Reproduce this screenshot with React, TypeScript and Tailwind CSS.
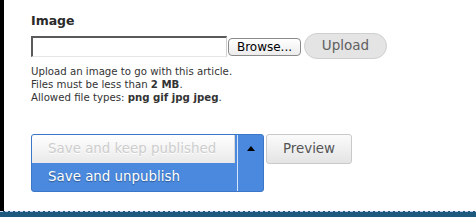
import React from "react";

export default function App() {
  return (
    <div className="w-[476px] h-[217px] flex flex-col bg-white font-['DejaVu_Sans',sans-serif] overflow-hidden">
      <div className="flex flex-1">
        <div className="w-[4px] bg-black" />
        <div className="pl-[27px] pt-[13px]">
          <div className="text-[12.5px] font-bold leading-[15px] text-[#2a2a2a]">Image</div>
          <div className="mt-[5px] flex items-center h-[26px]">
            <div className="w-[196px] h-[21px] border-t-2 border-l-2 border-t-[#5a5a5a] border-l-[#5a5a5a] border-b border-r border-b-[#e6e6e6] border-r-[#d0d0d0] bg-white" />
            <div className="ml-[1px] mt-[2px] w-[73px] h-[18px] rounded-[4px] border border-[#8a8a8a] bg-gradient-to-b from-white to-[#ececec] flex items-center justify-center text-[12px] leading-none text-black">
              Browse...
            </div>
            <div className="ml-[3px] w-[83px] h-[26px] rounded-full border border-[#cfcfcf] bg-[#e4e4e4] flex items-center justify-center text-[13.5px] leading-none text-[#606060]">
              Upload
            </div>
          </div>
          <div className="mt-[6px] text-[10.2px] leading-[13px] text-[#333]">
            <div>Upload an image to go with this article.</div>
            <div>
              Files must be less than <span className="font-bold">2 MB</span>.
            </div>
            <div>
              Allowed file types: <span className="font-bold">png gif jpg jpeg</span>.
            </div>
          </div>
          <div className="mt-[30px] flex items-start">
            <div className="flex w-[233px] h-[58px] rounded-[3px] border border-[#3b76c9] bg-[#4a89dd] overflow-hidden">
              <div className="flex flex-col w-[203px]">
                <div className="h-[28px] bg-gradient-to-b from-white to-[#e9e9e9] border-r border-[#d8d8d8] flex items-center pl-[16px] text-[13.4px] text-[#cdcdcd] [text-shadow:0_1px_0_#fff]">
                  Save and keep published
                </div>
                <div className="flex-1 flex items-center pl-[16px] text-[13.4px] text-white [text-shadow:0_1px_1px_rgba(0,0,0,0.35)]">
                  Save and unpublish
                </div>
              </div>
              <div className="w-[2px]" />
              <div className="w-[1px] bg-[#d6e4f7]" />
              <div className="flex-1 flex justify-center pt-[11px]">
                <svg width="8" height="5" viewBox="0 0 8 5">
                  <polygon points="4,0 8,5 0,5" fill="#000" />
                </svg>
              </div>
            </div>
            <div className="ml-[2px] w-[86px] h-[30px] rounded-[3px] border border-[#c9c9c9] bg-gradient-to-b from-[#fbfbfb] to-[#e4e4e4] flex items-center justify-center text-[13.4px] text-[#555]">
              Preview
            </div>
          </div>
        </div>
      </div>
      <div className="h-[1px] bg-[repeating-linear-gradient(90deg,#c9d0f0_0_3px,#1d5a7e_3px_5px)]" />
      <div className="h-[5px] bg-[#1d5a7e]" />
    </div>
  );
}
